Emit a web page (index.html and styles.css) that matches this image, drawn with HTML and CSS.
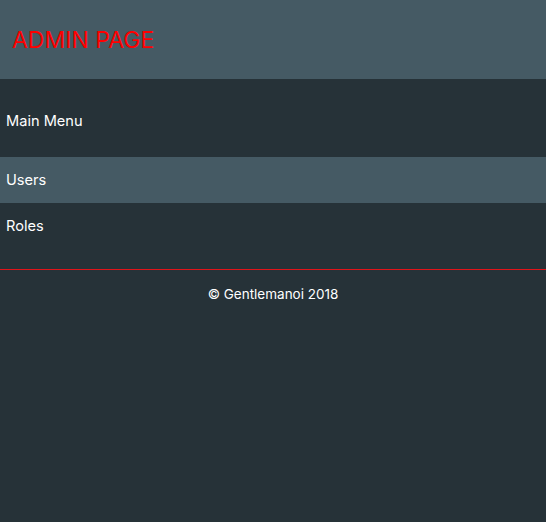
FILE: index.html
```html
<!DOCTYPE html>
<html>
<head>
<meta charset="utf-8">
<link rel="stylesheet" href="styles.css">
</head>
<body>
<header class="topbar">
  <h1 class="title">ADMIN PAGE</h1>
</header>
<nav class="menu">
  <div class="menu-heading">Main Menu</div>
  <ul class="menu-list">
    <li class="menu-item active">Users</li>
    <li class="menu-item">Roles</li>
  </ul>
</nav>
<footer class="footer">
  <p class="copy">© Gentlemanoi 2018</p>
</footer>
</body>
</html>
```
FILE: styles.css
```css
html, body {
  margin: 0;
  padding: 0;
  background: #263238;
  font-family: "Inter", "DejaVu Sans", sans-serif;
  color: #ffffff;
}
.topbar {
  height: 79px;
  background: #455a64;
  display: flex;
  align-items: center;
  padding-left: 12px;
}
.title {
  margin: 0;
  font-size: 23px;
  font-weight: 400;
  color: #ff0000;
}
.menu-heading {
  height: 78px;
  display: flex;
  align-items: center;
  padding-left: 6px;
  font-size: 14.6px;
  padding-top: 6px;
  box-sizing: border-box;
}
.menu-list {
  list-style: none;
  margin: 0;
  padding: 0;
}
.menu-item {
  height: 46px;
  display: flex;
  align-items: center;
  padding-left: 6px;
  padding-bottom: 1px;
  box-sizing: border-box;
  font-size: 14.6px;
}
.menu-item.active {
  background: #455a64;
}
.footer {
  margin-top: 20px;
  border-top: 1px solid #e0141a;
  text-align: center;
}
.copy {
  margin: 0;
  padding-top: 16px;
  font-size: 13.5px;
}
```
